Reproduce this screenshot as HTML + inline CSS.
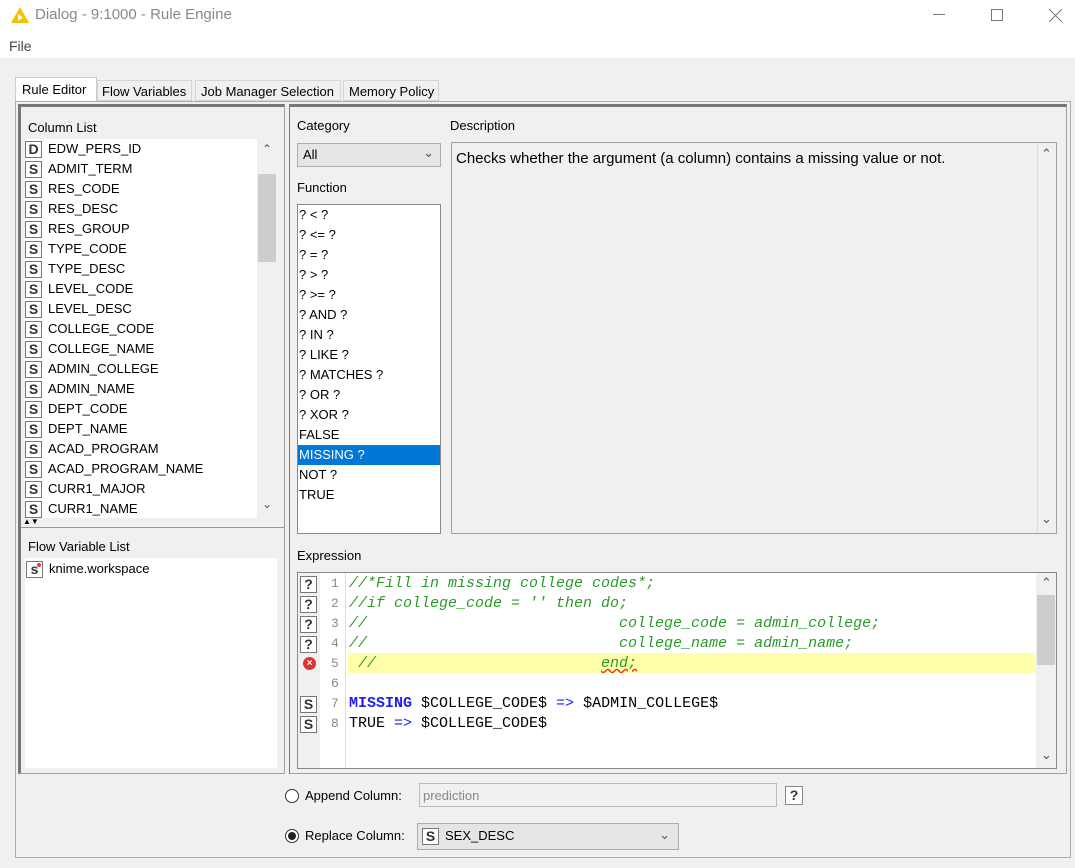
<!DOCTYPE html>
<html><head><style>
*{margin:0;padding:0;box-sizing:border-box}
body{width:1075px;height:868px;background:#f0f0f0;font-family:"Liberation Sans",sans-serif;font-size:13px;color:#000;position:relative;overflow:hidden}
.a{position:absolute}
.w{background:#fff}
.row{position:absolute;left:0;height:20px;line-height:20px;white-space:nowrap}
.ic{display:inline-block;width:17px;height:17px;border:1px solid #777;background:#fff;font-weight:bold;font-size:14px;line-height:15px;text-align:center;vertical-align:middle;margin-right:6px;color:#333}
.code{font-family:"Liberation Mono",monospace;font-size:15px;white-space:pre}
.cm{color:#2a9a2a;font-style:italic}
.kw{color:#1c1cf0;font-weight:bold}
.op{color:#1c1cf0}
</style></head><body>
<div class="a w" style="left:0;top:0;width:1075px;height:58px"></div>
<svg class="a" style="left:10px;top:6px" width="20" height="18"><path d="M10 1 L19 17 L1 17 Z" fill="#f5c400"/><path d="M8 8 L13 11.5 L8 15 Z" fill="#fff"/></svg>
<div class="a" style="left:35px;top:6px;font-size:15px;color:#888">Dialog - 9:1000 - Rule Engine</div>
<div class="a" style="left:933px;top:14px;width:12px;height:1px;background:#777"></div>
<div class="a" style="left:991px;top:9px;width:12px;height:12px;border:1px solid #777"></div>
<svg class="a" style="left:1049px;top:9px" width="13" height="13"><path d="M0 0L13 13M13 0L0 13" stroke="#777"/></svg>
<div class="a" style="left:9px;top:38px;font-size:14px;color:#444">File</div>

<div class="a" style="left:15px;top:77px;width:82px;height:25px;background:#fff;border:1px solid #ccc;border-bottom:none;padding:4px 0 0 6px">Rule Editor</div>
<div class="a" style="left:97px;top:80px;width:95px;height:21px;border:1px solid #d4d4d4;padding:3px 0 0 4px">Flow Variables</div>
<div class="a" style="left:195px;top:80px;width:146px;height:21px;border:1px solid #d4d4d4;padding:3px 0 0 5px">Job Manager Selection</div>
<div class="a" style="left:343px;top:80px;width:96px;height:21px;border:1px solid #d4d4d4;padding:3px 0 0 5px">Memory Policy</div>
<div class="a" style="left:15px;top:101px;width:1056px;height:757px;border:1px solid #adadad"></div>

<div class="a" style="left:18px;top:104px;width:267px;height:670px;border:1px solid #a0a0a0;border-top:3px solid #777;border-left:3px solid #777"></div>
<div class="a" style="left:28px;top:120px">Column List</div>
<div class="a w" style="left:25px;top:139px;width:252px;height:379px;overflow:hidden">
<div class="a" style="left:232px;top:0;width:20px;height:379px;background:#f0f0f0"></div>
<div class="a" style="left:233px;top:35px;width:18px;height:88px;background:#cdcdcd"></div>
<div class="a" style="left:237px;top:3px;font-size:12px;color:#555">&#8963;</div>
<div class="a" style="left:237px;top:358px;font-size:12px;color:#555">&#8964;</div>
<div class="row" style="top:0"><span class="ic">D</span>EDW_PERS_ID</div>
<div class="row" style="top:20px"><span class="ic">S</span>ADMIT_TERM</div>
<div class="row" style="top:40px"><span class="ic">S</span>RES_CODE</div>
<div class="row" style="top:60px"><span class="ic">S</span>RES_DESC</div>
<div class="row" style="top:80px"><span class="ic">S</span>RES_GROUP</div>
<div class="row" style="top:100px"><span class="ic">S</span>TYPE_CODE</div>
<div class="row" style="top:120px"><span class="ic">S</span>TYPE_DESC</div>
<div class="row" style="top:140px"><span class="ic">S</span>LEVEL_CODE</div>
<div class="row" style="top:160px"><span class="ic">S</span>LEVEL_DESC</div>
<div class="row" style="top:180px"><span class="ic">S</span>COLLEGE_CODE</div>
<div class="row" style="top:200px"><span class="ic">S</span>COLLEGE_NAME</div>
<div class="row" style="top:220px"><span class="ic">S</span>ADMIN_COLLEGE</div>
<div class="row" style="top:240px"><span class="ic">S</span>ADMIN_NAME</div>
<div class="row" style="top:260px"><span class="ic">S</span>DEPT_CODE</div>
<div class="row" style="top:280px"><span class="ic">S</span>DEPT_NAME</div>
<div class="row" style="top:300px"><span class="ic">S</span>ACAD_PROGRAM</div>
<div class="row" style="top:320px"><span class="ic">S</span>ACAD_PROGRAM_NAME</div>
<div class="row" style="top:340px"><span class="ic">S</span>CURR1_MAJOR</div>
<div class="row" style="top:360px"><span class="ic">S</span>CURR1_NAME</div>
</div>
<div class="a" style="left:23px;top:518px;font-size:8px;line-height:8px">&#9650;&#9660;</div>
<div class="a" style="left:21px;top:527px;width:263px;height:1px;background:#999"></div>
<div class="a" style="left:28px;top:539px">Flow Variable List</div>
<div class="a w" style="left:25px;top:558px;width:252px;height:210px">
<div class="row" style="top:1px;left:1px"><span class="ic" style="position:relative">s<span style="position:absolute;right:1px;top:1px;width:4px;height:4px;border-radius:2px;background:#e33"></span></span>knime.workspace</div>
</div>

<div class="a" style="left:289px;top:104px;width:778px;height:670px;border:1px solid #a0a0a0;border-top:3px solid #777;border-left:1px solid #777"></div>
<div class="a" style="left:297px;top:118px">Category</div>
<div class="a" style="left:297px;top:143px;width:144px;height:24px;background:#e5e5e5;border:1px solid #adadad;padding:3px 0 0 5px">All<span class="a" style="right:6px;top:1px;color:#555">&#8964;</span></div>
<div class="a" style="left:297px;top:180px">Function</div>
<div class="a w" style="left:297px;top:204px;width:144px;height:330px;border:1px solid #828790">
<div class="row" style="top:0;left:1px">? &lt; ?</div>
<div class="row" style="top:20px;left:1px">? &lt;= ?</div>
<div class="row" style="top:40px;left:1px">? = ?</div>
<div class="row" style="top:60px;left:1px">? &gt; ?</div>
<div class="row" style="top:80px;left:1px">? &gt;= ?</div>
<div class="row" style="top:100px;left:1px">? AND ?</div>
<div class="row" style="top:120px;left:1px">? IN ?</div>
<div class="row" style="top:140px;left:1px">? LIKE ?</div>
<div class="row" style="top:160px;left:1px">? MATCHES ?</div>
<div class="row" style="top:180px;left:1px">? OR ?</div>
<div class="row" style="top:200px;left:1px">? XOR ?</div>
<div class="row" style="top:220px;left:1px">FALSE</div>
<div class="row" style="top:240px;left:0;width:142px;background:#0078d7;color:#fff;padding-left:1px">MISSING ?</div>
<div class="row" style="top:260px;left:1px">NOT ?</div>
<div class="row" style="top:280px;left:1px">TRUE</div>
</div>
<div class="a" style="left:450px;top:118px">Description</div>
<div class="a" style="left:451px;top:142px;width:606px;height:392px;border:1px solid #a0a0a0;background:#f0f0f0">
<div class="a" style="left:4px;top:7px;font-size:15px">Checks whether the argument (a column) contains a missing value or not.</div>
<div class="a" style="left:585px;top:0;width:19px;height:390px;border-left:1px solid #ddd"></div>
<div class="a" style="left:589px;top:3px;color:#555">&#8963;</div>
<div class="a" style="left:589px;top:368px;color:#555">&#8964;</div>
</div>

<div class="a" style="left:297px;top:548px">Expression</div>
<div class="a w" style="left:297px;top:572px;width:760px;height:197px;border:1px solid #828790;overflow:hidden">
<div class="a" style="left:0;top:0;width:22px;height:197px;background:#f0f0f0"></div>
<div class="a" style="left:47px;top:0;width:1px;height:197px;background:#ddd"></div>
<div class="a" style="left:50px;top:80px;width:688px;height:20px;background:#ffffaa"></div>
<div class="a" style="left:738px;top:0;width:20px;height:197px;background:#f0f0f0"></div>
<div class="a" style="left:739px;top:22px;width:18px;height:70px;background:#cdcdcd"></div>
<div class="a" style="left:743px;top:2px;color:#555">&#8963;</div>
<div class="a" style="left:743px;top:174px;color:#555">&#8964;</div>
<div class="row" style="top:1px;left:2px"><span class="ic">?</span></div>
<div class="row" style="top:21px;left:2px"><span class="ic">?</span></div>
<div class="row" style="top:41px;left:2px"><span class="ic">?</span></div>
<div class="row" style="top:61px;left:2px"><span class="ic">?</span></div>
<div class="a" style="left:5px;top:84px;width:13px;height:13px;border-radius:7px;background:#d33;color:#fff;font-size:10px;line-height:13px;text-align:center;font-weight:bold">×</div>
<div class="row" style="top:121px;left:2px"><span class="ic">S</span></div>
<div class="row" style="top:141px;left:2px"><span class="ic">S</span></div>
<div class="a code" style="left:33px;top:1px;line-height:20px;color:#888;font-size:13px">1
2
3
4
5
6
7
8</div>
<div class="a code" style="left:51px;top:1px;line-height:20px"><span class="cm">//*Fill in missing college codes*;</span>
<span class="cm">//if college_code = '' then do;</span>
<span class="cm">//                            college_code = admin_college;</span>
<span class="cm">//                            college_name = admin_name;</span>
<span class="cm"> //                         <span style="text-decoration:underline wavy #e33">end;</span></span>

<span class="kw">MISSING</span> $COLLEGE_CODE$ <span class="op">=&gt;</span> $ADMIN_COLLEGE$
TRUE <span class="op">=&gt;</span> $COLLEGE_CODE$</div>
</div>

<div class="a" style="left:285px;top:789px;width:14px;height:14px;border-radius:7px;border:1px solid #333;background:#fff"></div>
<div class="a" style="left:305px;top:788px">Append Column:</div>
<div class="a" style="left:419px;top:783px;width:358px;height:24px;border:1px solid #bbb;background:#f0f0f0;color:#888;padding:4px 0 0 3px">prediction</div>
<div class="a" style="left:785px;top:786px;width:18px;height:19px;border:1px solid #888;background:#fff;font-weight:bold;text-align:center;line-height:17px;font-size:14px;color:#333">?</div>
<div class="a" style="left:285px;top:829px;width:14px;height:14px;border-radius:7px;border:1px solid #333;background:#fff"><div style="margin:2px;width:8px;height:8px;border-radius:4px;background:#222"></div></div>
<div class="a" style="left:305px;top:828px">Replace Column:</div>
<div class="a" style="left:417px;top:823px;width:262px;height:27px;border:1px solid #adadad;background:#e5e5e5;padding:4px 0 0 4px"><span class="ic">S</span>SEX_DESC<span class="a" style="right:8px;top:3px;color:#555">&#8964;</span></div>
</body></html>
